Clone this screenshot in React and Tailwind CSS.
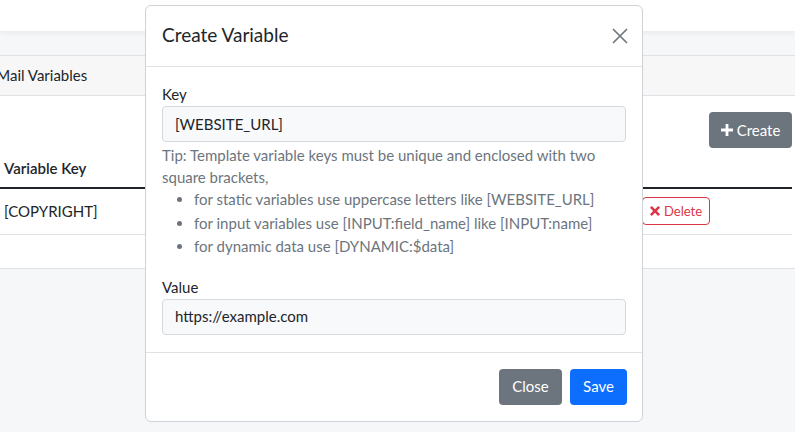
const font = { fontFamily: 'Lato, "Noto Sans", sans-serif' };

const PlusIcon = () => (
  <svg viewBox="0 0 12 12" className="h-[12px] w-[12px]" fill="currentColor">
    <path d="M4.6 0h2.8v4.6H12v2.8H7.4V12H4.6V7.4H0V4.6h4.6z" />
  </svg>
);

const TimesIcon = () => (
  <svg viewBox="0 0 10 10" className="h-[10px] w-[10px]" fill="currentColor">
    <path d="M1.8 0L5 3.2 8.2 0 10 1.8 6.8 5 10 8.2 8.2 10 5 6.8 1.8 10 0 8.2 3.2 5 0 1.8z" />
  </svg>
);

const CloseIcon = () => (
  <svg viewBox="0 0 16 16" className="h-[16px] w-[16px]" stroke="currentColor" strokeWidth="1.6" fill="none">
    <path d="M1 1l14 14M15 1L1 15" />
  </svg>
);

const tips = [
  'for static variables use uppercase letters like [WEBSITE_URL]',
  'for input variables use [INPUT:field_name] like [INPUT:name]',
  'for dynamic data use [DYNAMIC:$data]',
];

export default function App() {
  return (
    <div className="relative h-[432px] w-[795px] overflow-hidden bg-[#f5f7f9] text-[15px] text-[#212529]" style={font}>
      <header className="h-[31px] bg-white shadow-[0_2px_5px_rgba(0,0,0,0.06)]" />

      <div className="mt-[24px] -ml-[20px] w-[828px] border-y border-[#dee2e6] bg-white">
        <div className="flex h-[40px] items-center border-b border-[#dee2e6] bg-[#f7f7f7] pl-[2px]">
          <span>E-Mail Variables</span>
        </div>
        <div className="px-[16px] pt-[16px] pb-[33px]">
          <div className="flex justify-end">
            <button className="flex h-[36px] w-[83px] items-center justify-center gap-[4px] rounded-[4px] bg-[#6c757d] text-white">
              <PlusIcon />
              Create
            </button>
          </div>
          <table className="mt-[2px] w-full border-collapse">
            <thead>
              <tr className="border-b-2 border-[#212529]">
                <th className="h-[38px] px-[8px] text-left font-semibold">Variable Key</th>
                <th className="px-[8px]" />
                <th className="px-[8px]" />
              </tr>
            </thead>
            <tbody>
              <tr className="border-b border-[#dee2e6]">
                <td className="h-[46px] w-[450px] px-[8px]">[COPYRIGHT]</td>
                <td className="w-[188px] px-[8px]" />
                <td className="px-[8px]">
                  <button className="flex h-[28px] w-[68px] items-center justify-center gap-[4px] rounded-[4px] border border-[#dc3545] text-[13px] text-[#dc3545]">
                    <TimesIcon />
                    Delete
                  </button>
                </td>
              </tr>
            </tbody>
          </table>
        </div>
      </div>

      <div className="absolute top-[5px] left-[145px] w-[498px] rounded-[6px] border border-[#cfd2d6] bg-white">
        <div className="flex h-[61px] items-center justify-between border-b border-[#dee2e6] px-[16px] pb-[3px]">
          <h5 className="text-[19px] leading-none">Create Variable</h5>
          <span className="mr-[-2px] mt-[2px] text-[#6c757d]">
            <CloseIcon />
          </span>
        </div>
        <div className="px-[16px] pt-[15px] pb-[17px]">
          <label className="block leading-[24px]">Key</label>
          <div className="flex h-[36px] items-center rounded-[4px] border border-[#d5d9de] bg-[#f8f9fb] px-[12px]">
            [WEBSITE_URL]
          </div>
          <div className="mt-[2px] leading-[22px] text-[#6c757d]">
            Tip: Template variable keys must be unique and enclosed with two square brackets,
            <ul className="list-disc pl-[32px] leading-[23.5px]">
              {tips.map((t) => (
                <li key={t}>{t}</li>
              ))}
            </ul>
          </div>
          <label className="mt-[16px] block leading-[24px]">Value</label>
          <div className="flex h-[36px] items-center rounded-[4px] border border-[#d5d9de] bg-[#f8f9fb] px-[12px]">
            https://example.com
          </div>
        </div>
        <div className="flex justify-end gap-[8px] border-t border-[#dee2e6] px-[15px] pt-[16px] pb-[16px]">
          <button className="h-[36px] w-[63px] rounded-[4px] bg-[#6c757d] text-white">Close</button>
          <button className="h-[36px] w-[57px] rounded-[4px] bg-[#0d6efd] text-white">Save</button>
        </div>
      </div>
    </div>
  );
}
